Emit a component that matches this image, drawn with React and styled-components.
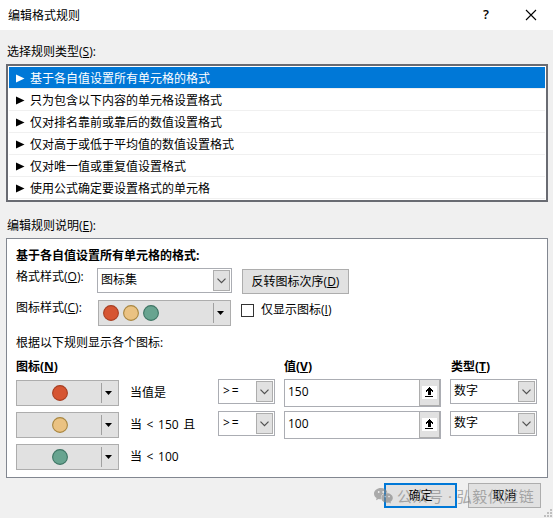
import React from "react";
import styled, { createGlobalStyle } from "styled-components";

const Global = createGlobalStyle`
  * { box-sizing: border-box; }
  html, body { margin: 0; padding: 0; background: #f0f0f0; overflow: hidden; }
`;

const Dialog = styled.div`
  position: relative;
  width: 553px;
  height: 518px;
  background: #f0f0f0;
  color: #000;
  font: 12px/16px "Open Sans", "Noto Sans CJK SC", sans-serif;
  white-space: nowrap;
`;

const TitleBar = styled.header`
  display: flex;
  align-items: center;
  height: 30px;
  padding: 0 16px 0 8px;
  background: #fff;
`;

const Title = styled.div`
  flex: 1;
  padding-top: 1px;
`;

const Help = styled.div`
  width: 12px;
  margin-right: 33px;
  text-align: center;
  font-size: 13px;
  font-weight: 600;
  line-height: 28px;
  height: 30px;
`;

const SectionLabel = styled.div`
  height: ${(p) => p.$height}px;
  padding: ${(p) => p.$top}px 0 0 7px;
`;

const RuleList = styled.ul`
  list-style: none;
  width: 542px;
  height: 138px;
  margin: 0 0 0 6px;
  padding: 1px;
  border: 2px solid #696b72;
  background: #fff;
`;

const Rule = styled.li`
  display: flex;
  align-items: center;
  height: 22px;
  padding: 2px 0 0 7px;
  gap: 5px;
  border-bottom: 1px solid #f0f0f0;
  background: ${(p) => (p.$selected ? "#0078d7" : "#fff")};
  color: ${(p) => (p.$selected ? "#fff" : "#000")};
  background-clip: padding-box;
`;

const Panel = styled.section`
  width: 542px;
  height: 240px;
  margin-left: 6px;
  padding: 9px 0 0 9px;
  border: 1px solid #828790;
  background: #fff;
`;

const Bold = styled.div`
  font-weight: 700;
  height: ${(p) => p.$height || 16}px;
`;

const FormRow = styled.div`
  display: flex;
  align-items: flex-start;
  height: ${(p) => p.$height}px;
`;

const FieldLabel = styled.div`
  width: ${(p) => p.$width}px;
  padding-top: ${(p) => p.$top || 0}px;
`;

const ComboBox = styled.div`
  display: flex;
  align-items: center;
  justify-content: space-between;
  width: ${(p) => p.$width}px;
  height: 25px;
  padding: 0 1px 0 3px;
  border: 1px solid #abadb3;
  background: #fff;
`;

const ComboText = styled.span`
  padding: 0 0 1px ${(p) => p.$inset || 0}px;
  letter-spacing: ${(p) => p.$spacing || 0}px;
`;

const ComboButton = styled.span`
  display: flex;
  align-items: center;
  justify-content: center;
  width: 17px;
  height: 21px;
  border: 1px solid #adadad;
  background: #e1e1e1;
`;

const IconButton = styled.div`
  display: flex;
  align-items: center;
  width: ${(p) => p.$width}px;
  height: 26px;
  border: 1px solid #adadad;
  background: #e1e1e1;
`;

const IconSlot = styled.div`
  display: flex;
  flex: 1;
  gap: 4px;
  justify-content: ${(p) => (p.$centered ? "center" : "flex-start")};
  padding-left: ${(p) => (p.$centered ? 2 : 4)}px;
`;

const DropArrow = styled.div`
  display: flex;
  align-items: center;
  width: 17px;
  height: 20px;
  padding-left: 3px;
  border-left: 1px solid #a0a0a0;
`;

const PushButton = styled.div`
  display: flex;
  align-items: center;
  justify-content: center;
  width: ${(p) => p.$width}px;
  height: 25px;
  padding-top: 1px;
  border: ${(p) => (p.$primary ? "2px solid #0078d7" : "1px solid #adadad")};
  background: #e1e1e1;
`;

const CheckOption = styled.div`
  display: flex;
  align-items: center;
  gap: 7px;
  margin: 2px 0 0 10px;
`;

const CheckBox = styled.span`
  width: 13px;
  height: 13px;
  margin-top: 1px;
  border: 1px solid #333;
  background: #fff;
`;

const Headings = styled.div`
  display: grid;
  grid-template-columns: 268px 167px 1fr;
  height: 20px;
  font-weight: 700;
`;

const CriteriaRow = styled.div`
  display: grid;
  grid-template-columns: 114px 88px 66px 166px 87px;
  height: 32px;
`;

const IconCell = styled.div`
  padding-top: 1px;
`;

const Condition = styled.div`
  padding-top: 6px;
  word-spacing: 1.5px;
`;

const ValueField = styled.div`
  display: flex;
  align-items: flex-start;
  justify-content: space-between;
  width: 157px;
  height: 28px;
  padding-left: 3px;
  border: 1px solid #abadb3;
  background: #fff;
`;

const ValueText = styled.span`
  padding-top: 4px;
`;

const PickButton = styled.span`
  display: flex;
  align-items: center;
  justify-content: center;
  width: 21px;
  height: 26px;
  border: solid #adadad;
  border-width: 0 1px 1px 1px;
  background: #e1e1e1;
`;

const Footer = styled.footer`
  display: flex;
  justify-content: flex-end;
  gap: 11px;
  padding: 5px 12px 0 0;
`;

const Watermark = styled.div`
  position: absolute;
  left: 374px;
  top: 485px;
  display: flex;
  align-items: center;
  gap: 4px;
  color: #858585;
  opacity: 0.65;
  font-size: 15px;
  line-height: 22px;
  letter-spacing: 0.5px;
`;

const Grip = styled.svg`
  position: absolute;
  right: 1px;
  bottom: 1px;
`;

const Close = () => (
  <svg width="12" height="12" viewBox="0 0 12 12" stroke="#000" strokeWidth="1.1">
    <path d="M1 1l10 10M11 1L1 11" />
  </svg>
);

const Play = () => (
  <svg width="9" height="9" viewBox="0 0 9 9" fill="currentColor">
    <path d="M0 .5L8.5 4.500 0 8.500z" />
  </svg>
);

const Chevron = () => (
  <svg width="9" height="6" viewBox="0 0 9 6" fill="none" stroke="#505050" strokeWidth="1.2">
    <path d="M.5 .7l4 4 4-4" />
  </svg>
);

const Dot = ({ color, edge }) => (
  <svg width="16" height="16" viewBox="0 0 16 16">
    <circle cx="8" cy="8" r="7.4" fill={color} stroke={edge} strokeWidth="1.1" />
  </svg>
);

const Split = () => (
  <DropArrow>
    <svg width="7" height="4" viewBox="0 0 7 4">
      <path d="M0 0h7L3.5 4z" />
    </svg>
  </DropArrow>
);

const UpArrow = () => (
  <svg width="15" height="13" viewBox="0 0 15 13" shapeRendering="crispEdges">
    <path fill="#fff" d="M0 0h15v13H0z" />
    <path d="M7 1h1v1h1v1h1v1h1v2h-1V5H9v4H6V5H5v1H4V4h1V3h1V2h1zM3 10h8v1H3z" />
  </svg>
);

const Combo = ({ width, inset, spacing, children }) => (
  <ComboBox $width={width}>
    <ComboText $inset={inset} $spacing={spacing}>{children}</ComboText>
    <ComboButton><Chevron /></ComboButton>
  </ComboBox>
);

const COLORS = [
  { color: "#d65532", edge: "#a84024" },
  { color: "#eac282", edge: "#a88640" },
  { color: "#68a490", edge: "#3f7565" },
];

const RULES = [
  "基于各自值设置所有单元格的格式",
  "只为包含以下内容的单元格设置格式",
  "仅对排名靠前或靠后的数值设置格式",
  "仅对高于或低于平均值的数值设置格式",
  "仅对唯一值或重复值设置格式",
  "使用公式确定要设置格式的单元格",
];

const CRITERIA = [
  { text: "当值是", value: "150" },
  { text: "当 < 150 且", value: "100" },
  { text: "当 < 100" },
];

export default function App() {
  return (
    <Dialog>
      <Global />
      <TitleBar>
        <Title>编辑格式规则</Title>
        <Help>?</Help>
        <Close />
      </TitleBar>
      <SectionLabel $height={34} $top={14}>选择规则类型(<u>S</u>):</SectionLabel>
      <RuleList>
        {RULES.map((rule, i) => (
          <Rule key={rule} $selected={i === 0}><Play />{rule}</Rule>
        ))}
      </RuleList>
      <SectionLabel $height={36} $top={16}>编辑规则说明(<u>E</u>):</SectionLabel>
      <Panel>
        <Bold $height={20}>基于各自值设置所有单元格的格式:</Bold>
        <FormRow $height={32}>
          <FieldLabel $width={81} $top={1}>格式样式(<u>O</u>):</FieldLabel>
          <Combo width={135}>图标集</Combo>
          <FieldLabel $width={10} />
          <FieldLabel $width={107} $top={1}>
            <PushButton $width={107}><span>反转图标次序(<u>D</u>)</span></PushButton>
          </FieldLabel>
        </FormRow>
        <FormRow $height={35}>
          <FieldLabel $width={82}>图标样式(<u>C</u>):</FieldLabel>
          <IconButton $width={133}>
            <IconSlot>{COLORS.map((c) => <Dot key={c.color} {...c} />)}</IconSlot>
            <Split />
          </IconButton>
          <CheckOption><CheckBox /><span>仅显示图标(<u>I</u>)</span></CheckOption>
        </FormRow>
        <FormRow $height={24}>根据以下规则显示各个图标:</FormRow>
        <Headings>
          <span>图标(<u>N</u>)</span><span>值(<u>V</u>)</span><span>类型(<u>T</u>)</span>
        </Headings>
        {CRITERIA.map((c, i) => (
          <CriteriaRow key={c.text}>
            <IconCell>
              <IconButton $width={103}>
                <IconSlot $centered><Dot {...COLORS[i]} /></IconSlot>
                <Split />
              </IconButton>
            </IconCell>
            <Condition>{c.text}</Condition>
            {c.value && (
              <>
                <Combo width={57} inset={1} spacing={2}>&gt;=</Combo>
                <ValueField><ValueText>{c.value}</ValueText><PickButton><UpArrow /></PickButton></ValueField>
                <Combo width={87}>数字</Combo>
              </>
            )}
          </CriteriaRow>
        ))}
      </Panel>
      <Footer>
        <PushButton $width={73} $primary>确定</PushButton>
        <PushButton $width={73}>取消</PushButton>
      </Footer>
      <Watermark>
        <svg width="19" height="16" viewBox="0 0 19 16" fill="#858585">
          <path d="M7 0C3 0 0 2.5 0 5.7c0 1.8 1 3.4 2.6 4.4L2 12.3l2.6-1.3c.8.2 1.5.3 2.4.3C6.300 7.500 9 4.600 13.500 4.400 12.700 1.800 10 0 7 0z" />
          <path d="M13 5.300c-3.300 0-5.700 2.100-5.700 4.700s2.500 4.700 5.700 4.700c.7 0 1.400-.1 2-.3l2 1.100-.5-1.800c1.500-.9 2.300-2.200 2.300-3.700 0-2.600-2.600-4.700-5.800-4.700z" />
          <g fill="#f0f0f0"><circle cx="4.700" cy="4" r=".9" /><circle cx="9.200" cy="4" r=".9" /><circle cx="11.200" cy="8.600" r=".8" /><circle cx="15" cy="8.600" r=".8" /></g>
        </svg>
        <span>公众号 · 弘毅供应链</span>
      </Watermark>
      <Grip width="8" height="8" viewBox="0 0 8 8" fill="#bfbfbf">
        <path d="M6 0h2v2H6zM3 3h2v2H3zM6 3h2v2H6zM0 6h2v2H0zM3 6h2v2H3zM6 6h2v2H6z" />
      </Grip>
    </Dialog>
  );
}
